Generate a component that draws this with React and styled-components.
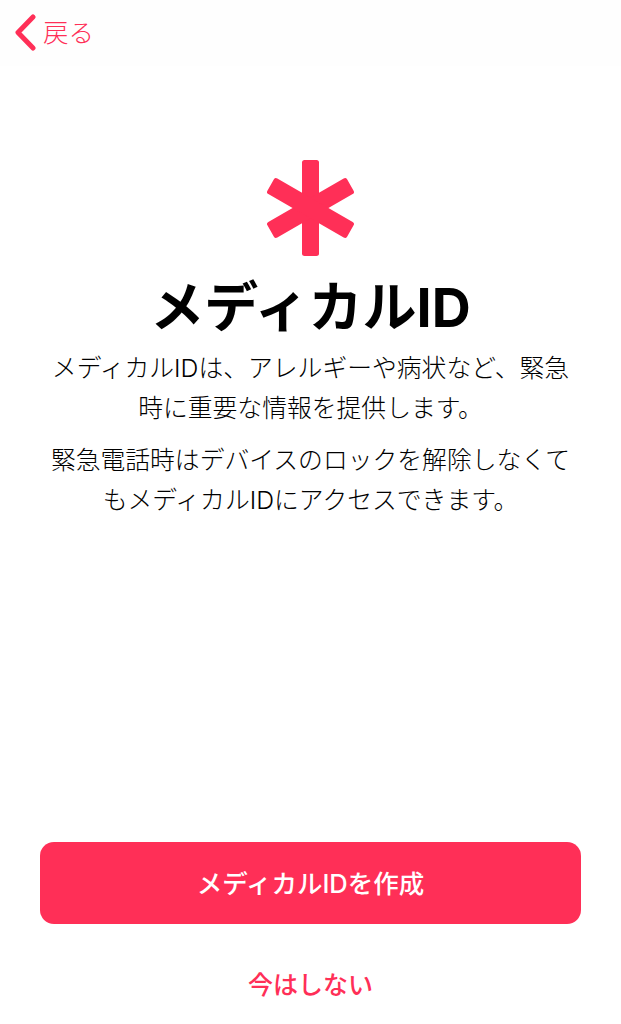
import React from 'react'
import styled, { createGlobalStyle } from 'styled-components'

const pink = '#ff2f57'

const GlobalStyle = createGlobalStyle`
	html, body {
		margin: 0;
		background: #fff;
		font-family: "Inter", "Noto Sans CJK JP", sans-serif;
	}
`

const Page = styled.div`
	width: 621px;
	height: 1024px;
	display: flex;
	flex-direction: column;
	align-items: center;
	overflow: hidden;
	background: #fff;
`

const NavBar = styled.div`
	width: 100%;
	height: 66px;
	box-sizing: border-box;
	padding: 0 0 2px 14px;
	display: flex;
	align-items: center;
	gap: 7px;
	background: #fefefe;
	color: ${pink};
	font-size: 25.5px;
	font-weight: 300;
`

const BackLabel = styled.span`
	margin-bottom: 3px;
`

const Hero = styled.div`
	margin-top: 94px;
	height: 96px;
	display: flex;
`

const Title = styled.h1`
	margin: 14px 0 0;
	font-size: 54px;
	line-height: 76px;
	font-weight: 700;
	color: #000;
`

const Body = styled.p`
	margin: ${props => props.$top}px 0 0;
	width: 540px;
	text-align: center;
	font-size: 24.8px;
	line-height: 40px;
	font-weight: 300;
	color: #000;
`

const Spacer = styled.div`
	flex: 1;
`

const Primary = styled.div`
	width: 541px;
	height: 82px;
	box-sizing: border-box;
	padding-bottom: 3px;
	border-radius: 14px;
	background: ${pink};
	color: #fff;
	font-size: 25.5px;
	font-weight: 500;
	display: flex;
	align-items: center;
	justify-content: center;
`

const Secondary = styled.div`
	height: 40px;
	margin: 41px 0 19px;
	color: ${pink};
	font-size: 25px;
	font-weight: 500;
	line-height: 40px;
`

const Chevron = () => (
	<svg width="22" height="37" viewBox="0 0 22 37">
		<path d="M19 3 L4 18.5 L19 34" fill="none" stroke={pink} strokeWidth="5" strokeLinecap="round" strokeLinejoin="round" />
	</svg>
)

const Asterisk = () => (
	<svg width="90" height="96" viewBox="0 0 90 96">
		<g fill={pink}>
			<rect x="36" y="0" width="17" height="96" rx="2.5" />
			<rect x="35.5" y="2" width="18" height="92" rx="2.5" transform="rotate(60 44.5 48)" />
			<rect x="35.5" y="2" width="18" height="92" rx="2.5" transform="rotate(120 44.5 48)" />
		</g>
	</svg>
)

const App = () => (
	<Page>
		<GlobalStyle />
		<NavBar>
			<Chevron />
			<BackLabel>戻る</BackLabel>
		</NavBar>
		<Hero>
			<Asterisk />
		</Hero>
		<Title>メディカルID</Title>
		<Body $top={2}>メディカルIDは、アレルギーや病状など、緊急時に重要な情報を提供します。</Body>
		<Body $top={12}>緊急電話時はデバイスのロックを解除しなくてもメディカルIDにアクセスできます。</Body>
		<Spacer />
		<Primary>メディカルIDを作成</Primary>
		<Secondary>今はしない</Secondary>
	</Page>
)

export default App
